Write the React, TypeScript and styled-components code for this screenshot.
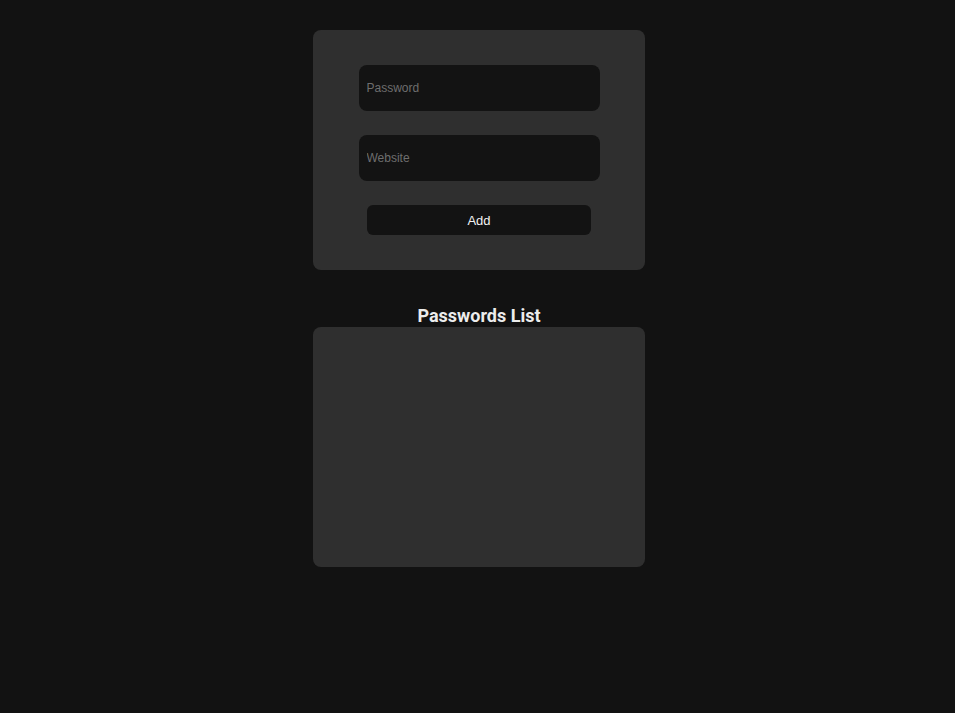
import React, { useState } from "react";
import styled, { createGlobalStyle } from "styled-components";

const GlobalStyle = createGlobalStyle`
  html, body {
    margin: 0;
    padding: 0;
    background: #121212;
    min-height: 100%;
  }
  body {
    font-family: "Liberation Sans", Arial, sans-serif;
  }
`;

const Page = styled.main`
  min-height: 713px;
  display: flex;
  flex-direction: column;
  align-items: center;
  padding: 30px 0 0 3px;
  box-sizing: border-box;
`;

const Card = styled.div`
  width: 332px;
  height: 240px;
  background: #2f2f2f;
  border-radius: 8px;
  box-sizing: border-box;
`;

const Form = styled.form`
  display: flex;
  flex-direction: column;
  align-items: center;
  gap: 24px;
  padding-top: 35px;
`;

const Input = styled.input`
  width: 241px;
  height: 46px;
  box-sizing: border-box;
  padding: 0 8px;
  border: none;
  outline: none;
  border-radius: 8px;
  background: #131313;
  color: #ddd;
  font-family: "Liberation Sans", Arial, sans-serif;
  font-size: 12px;

  &::placeholder {
    color: #6e6e6e;
  }
`;

const Button = styled.button`
  width: 224px;
  height: 30px;
  border: none;
  border-radius: 6px;
  background: #131313;
  color: #f2f2f2;
  font-family: "Liberation Sans", Arial, sans-serif;
  font-size: 13px;
  cursor: pointer;
`;

const Heading = styled.h2`
  margin: 35px 0 0;
  font-family: Roboto, "Liberation Sans", sans-serif;
  font-weight: 700;
  font-size: 18px;
  line-height: 22px;
  color: #ececec;
`;

type Entry = { password: string; website: string };

const App = () => {
  const [password, setPassword] = useState("");
  const [website, setWebsite] = useState("");
  const [entries, setEntries] = useState<Entry[]>([]);

  const handleSubmit = (e: React.FormEvent) => {
    e.preventDefault();
    if (!password || !website) return;
    setEntries([...entries, { password, website }]);
    setPassword("");
    setWebsite("");
  };

  return (
    <>
      <GlobalStyle />
      <Page>
        <Card>
          <Form onSubmit={handleSubmit}>
            <Input
              type="text"
              placeholder="Password"
              value={password}
              onChange={(e) => setPassword(e.target.value)}
            />
            <Input
              type="text"
              placeholder="Website"
              value={website}
              onChange={(e) => setWebsite(e.target.value)}
            />
            <Button type="submit">Add</Button>
          </Form>
        </Card>

        <Heading>Passwords List</Heading>
        <Card>
          {entries.map((entry, i) => (
            <div key={i}>
              {entry.website}: {entry.password}
            </div>
          ))}
        </Card>
      </Page>
    </>
  );
};

export default App;
